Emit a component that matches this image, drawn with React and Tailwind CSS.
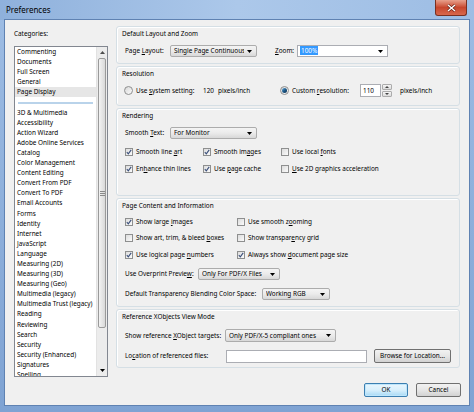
import React from "react";

const categories = [
  "Commenting",
  "Documents",
  "Full Screen",
  "General",
  "Page Display",
  "---",
  "3D & Multimedia",
  "Accessibility",
  "Action Wizard",
  "Adobe Online Services",
  "Catalog",
  "Color Management",
  "Content Editing",
  "Convert From PDF",
  "Convert To PDF",
  "Email Accounts",
  "Forms",
  "Identity",
  "Internet",
  "JavaScript",
  "Language",
  "Measuring (2D)",
  "Measuring (3D)",
  "Measuring (Geo)",
  "Multimedia (legacy)",
  "Multimedia Trust (legacy)",
  "Reading",
  "Reviewing",
  "Search",
  "Security",
  "Security (Enhanced)",
  "Signatures",
  "Spelling",
];

// small mnemonic helper: underline one letter
const U = ({ children }) => <span className="underline underline-offset-1">{children}</span>;

const Arrow = ({ className = "" }) => (
  <svg width="5" height="3" viewBox="0 0 5 3" className={className}>
    <path d="M0 0 H5 L2.5 3 Z" fill="#000" />
  </svg>
);

const Check = ({ checked, children }) => (
  <div className="flex items-center gap-[3px] leading-[10px]">
    <div className="w-[8px] h-[8px] border border-[#8e8f8f] bg-gradient-to-br from-[#dcdcdc] to-[#fbfbfb] flex items-center justify-center">
      {checked && (
        <svg width="6" height="6" viewBox="0 0 6 6">
          <path d="M0.8 3.2 L2.3 4.8 L5.2 0.9" stroke="#3b4f7a" strokeWidth="1.1" fill="none" />
        </svg>
      )}
    </div>
    <span>{children}</span>
  </div>
);

const Radio = ({ checked, children }) => (
  <div className="flex items-center gap-[3px] leading-[10px]">
    <div className="w-[9px] h-[9px] rounded-full border border-[#8e8f8f] bg-gradient-to-br from-[#d8d8d8] to-[#fbfbfb] flex items-center justify-center">
      {checked && (
        <div className="w-[5px] h-[5px] rounded-full bg-gradient-to-br from-[#6bb0e0] via-[#1d5a8a] to-[#0e2e4d]" />
      )}
    </div>
    <span>{children}</span>
  </div>
);

const Select = ({ width, height = "h-[12px]", children }) => (
  <div
    className={`${width} ${height} shrink-0 border border-[#acacac] rounded-[2px] bg-gradient-to-b from-[#f4f4f4] via-[#ebebeb] to-[#d8d8d8] flex items-center pl-[3px] pr-[4px]`}
  >
    <span className="flex-1 overflow-hidden whitespace-nowrap">{children}</span>
    <Arrow className="ml-[3px] shrink-0" />
  </div>
);

const Group = ({ height, title, children }) => (
  <div
    className={`${height} border border-[#d5dfe5] rounded-[3px] shadow-[inset_1px_1px_0_#ffffff] pt-[2px]`}
  >
    <div className="pl-[5px] leading-[10px]">{title}</div>
    <div className="pl-[8px]">{children}</div>
  </div>
);

export default function App() {
  return (
    <div className="w-[474px] h-[412px] flex flex-col bg-gradient-to-b from-[#9ebde4] to-[#7fa3d3] text-black font-['Noto_Sans',sans-serif] text-[6.4px] whitespace-nowrap overflow-hidden">
      {/* Title bar */}
      <div className="h-[20px] flex items-start justify-between bg-gradient-to-r from-[#8fb1dc] via-[#acc8ea] to-[#9dbde4]">
        <div className="pl-[6px] pt-[5px] text-[8px] leading-[10px]">Preferences</div>
        <div className="mr-[7px] w-[32px] h-[16px] rounded-b-[3px] border border-t-0 border-[#7a3020] bg-gradient-to-b from-[#e7a08c] via-[#c7462d] to-[#d8684c] flex items-center justify-center">
          <svg width="9" height="8" viewBox="0 0 9 8">
            <path d="M1 1 L8 7 M8 1 L1 7" stroke="#5a1d12" strokeWidth="2.6" />
            <path d="M1 1 L8 7 M8 1 L1 7" stroke="#ffffff" strokeWidth="1.5" />
          </svg>
        </div>
      </div>

      {/* Client area */}
      <div className="mx-[5px] h-[385px] bg-[#f0f0f0] flex shadow-[0_0_0_1px_#5f82b2]">
        {/* Categories */}
        <div className="w-[111px] pl-[9px] pt-[9px]">
          <div className="leading-[10px]">Categories:</div>
          <div className="mt-[7px] w-[94px] h-[331px] border border-[#828790] bg-white flex">
            <div className="flex-1 overflow-hidden">
              {categories.map((c, i) =>
                c === "---" ? (
                  <div key={i} className="h-[10.1px] flex items-center px-[3px]">
                    <div className="w-full h-[2px] bg-[#b9d3ea]" />
                  </div>
                ) : (
                  <div
                    key={i}
                    className={`h-[10.1px] leading-[10.1px] pl-[2px] ${
                      c === "Page Display" ? "bg-[#e6e6e6]" : ""
                    }`}
                  >
                    {c}
                  </div>
                )
              )}
            </div>
            {/* scrollbar */}
            <div className="w-[11px] bg-[#ececec] border-l border-[#e2e2e2] flex flex-col">
              <div className="h-[11px] flex items-center justify-center">
                <svg width="5" height="3" viewBox="0 0 5 3">
                  <path d="M0 3 H5 L2.5 0 Z" fill="#4d4d4d" />
                </svg>
              </div>
              <div className="h-[270px] mx-[1px] rounded-[2px] border border-[#9a9a9a] bg-gradient-to-r from-[#f3f3f3] to-[#d9d9d9] flex items-center justify-center">
                <div className="flex flex-col gap-[1px]">
                  <div className="w-[5px] h-[1px] bg-[#8a8a8a]" />
                  <div className="w-[5px] h-[1px] bg-[#8a8a8a]" />
                  <div className="w-[5px] h-[1px] bg-[#8a8a8a]" />
                </div>
              </div>
              <div className="flex-1" />
              <div className="h-[11px] flex items-center justify-center">
                <Arrow />
              </div>
            </div>
          </div>
        </div>

        {/* Settings */}
        <div className="flex-1 pr-[9px] pt-[6px] flex flex-col gap-[2px]">
          <Group height="h-[38px]" title="Default Layout and Zoom">
            <div className="mt-[6px] flex items-center h-[12px]">
              <div className="w-[45px] shrink-0">
                Page <U>L</U>ayout:
              </div>
              <Select width="w-[87px]">Single Page Continuous</Select>
              <div className="ml-[18px] w-[22px] shrink-0">
                <U>Z</U>oom:
              </div>
              <div className="w-[91px] h-[12px] border border-[#abadb3] bg-white flex items-center pl-[2px] pr-[4px]">
                <span className="flex-1">
                  <span className="bg-[#3399ff] text-white px-[1px]">100%</span>
                </span>
                <Arrow />
              </div>
            </div>
          </Group>

          <Group height="h-[40px]" title="Resolution">
            <div className="mt-[5px] flex items-center h-[13px] -ml-[1px]">
              <div className="w-[79px] shrink-0">
                <Radio>
                  Use <U>s</U>ystem setting:
                </Radio>
              </div>
              <div className="w-[15px] shrink-0">120</div>
              <div className="w-[62px] shrink-0">pixels/inch</div>
              <div className="w-[80px] shrink-0">
                <Radio checked>
                  Custom <U>r</U>esolution:
                </Radio>
              </div>
              <div className="w-[21px] h-[13px] border border-[#abadb3] bg-white pl-[2px] leading-[11px]">110</div>
              <div className="ml-[1px] w-[10px] h-[13px] flex flex-col gap-px">
                <div className="flex-1 border border-[#acacac] rounded-[1px] bg-gradient-to-b from-[#f4f4f4] to-[#dcdcdc] flex items-center justify-center">
                  <svg width="4" height="2" viewBox="0 0 4 2">
                    <path d="M0 2 H4 L2 0 Z" fill="#444" />
                  </svg>
                </div>
                <div className="flex-1 border border-[#acacac] rounded-[1px] bg-gradient-to-b from-[#f4f4f4] to-[#dcdcdc] flex items-center justify-center">
                  <svg width="4" height="2" viewBox="0 0 4 2">
                    <path d="M0 0 H4 L2 2 Z" fill="#444" />
                  </svg>
                </div>
              </div>
              <div className="ml-[8px]">pixels/inch</div>
            </div>
          </Group>

          <Group height="h-[88px]" title="Rendering">
            <div className="mt-[6px] flex items-center h-[12px]">
              <div className="w-[45px] shrink-0">
                Smooth <U>T</U>ext:
              </div>
              <Select width="w-[87px]">For Monitor</Select>
            </div>
            <div className="mt-[8px] flex">
              <div className="w-[78px]">
                <Check checked>
                  Smooth line <U>a</U>rt
                </Check>
              </div>
              <div className="w-[78px]">
                <Check checked>
                  Smooth im<U>a</U>ges
                </Check>
              </div>
              <Check>
                Use local <U>f</U>onts
              </Check>
            </div>
            <div className="mt-[7px] flex">
              <div className="w-[78px]">
                <Check checked>
                  En<U>h</U>ance thin lines
                </Check>
              </div>
              <div className="w-[78px]">
                <Check checked>
                  Use <U>p</U>age cache
                </Check>
              </div>
              <Check>
                <U>U</U>se 2D graphics acceleration
              </Check>
            </div>
          </Group>

          <Group height="h-[109px]" title="Page Content and Information">
            <div className="mt-[6px] flex">
              <div className="w-[112px]">
                <Check checked>
                  Show large <U>i</U>mages
                </Check>
              </div>
              <Check>
                Use smooth z<U>o</U>oming
              </Check>
            </div>
            <div className="mt-[6px] flex">
              <div className="w-[112px]">
                <Check>
                  Show art, trim, &amp; bleed <U>b</U>oxes
                </Check>
              </div>
              <Check>
                Show transpar<U>e</U>ncy grid
              </Check>
            </div>
            <div className="mt-[7px] flex">
              <div className="w-[112px]">
                <Check checked>
                  Use logical page <U>n</U>umbers
                </Check>
              </div>
              <Check checked>
                Always show <U>d</U>ocument page size
              </Check>
            </div>
            <div className="mt-[8px] flex items-center h-[12px]">
              <div className="w-[73px] shrink-0">
                Use Overprint Previe<U>w</U>:
              </div>
              <Select width="w-[82px]">Only For PDF/X Files</Select>
            </div>
            <div className="mt-[8px] flex items-center h-[12px]">
              <div className="w-[137px] shrink-0">Default Transparency Blending Color Space:</div>
              <Select width="w-[68px]">Working RGB</Select>
            </div>
          </Group>

          <Group height="h-[59px]" title="Reference XObjects View Mode">
            <div className="mt-[7px] flex items-center h-[13px]">
              <div className="w-[100px] shrink-0">
                Show reference <U>X</U>Object targets:
              </div>
              <Select width="w-[111px]" height="h-[13px]">
                Only PDF/X-5 compliant ones
              </Select>
            </div>
            <div className="mt-[7px] flex items-center h-[14px]">
              <div className="w-[101px] shrink-0">
                Lo<U>c</U>ation of referenced files:
              </div>
              <div className="w-[141px] h-[13px] shrink-0 border border-[#abadb3] bg-white" />
              <div className="ml-[7px] w-[77px] h-[14px] shrink-0 border border-[#707070] rounded-[2px] bg-gradient-to-b from-[#f2f2f2] via-[#e6e6e6] to-[#d2d2d2] flex items-center justify-center">
                Browse for Location...
              </div>
            </div>
          </Group>

          {/* Dialog buttons */}
          <div className="mt-[13px] flex justify-end gap-[8px] -mr-[1px]">
            <div className="w-[44px] h-[14px] border border-[#3c7fb1] rounded-[2px] bg-gradient-to-b from-[#eaf6fd] via-[#d9f0fc] to-[#a7d9f5] shadow-[inset_0_0_0_1px_#bfe6fb] flex items-center justify-center">
              OK
            </div>
            <div className="w-[45px] h-[14px] border border-[#707070] rounded-[2px] bg-gradient-to-b from-[#f2f2f2] via-[#e6e6e6] to-[#d2d2d2] flex items-center justify-center">
              Cancel
            </div>
          </div>
        </div>
      </div>
    </div>
  );
}
